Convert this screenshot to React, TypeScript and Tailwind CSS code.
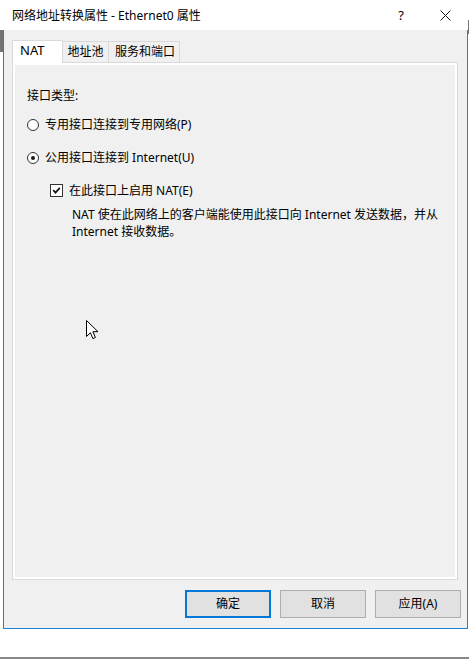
import React from "react";

const font = {
  fontFamily: '"Noto Sans", "Noto Sans CJK SC", sans-serif',
};

function Radio({ checked }: { checked?: boolean }) {
  return (
    <span className="flex h-[12px] w-[12px] items-center justify-center rounded-full border border-[#333333] bg-white">
      {checked && <span className="h-[4px] w-[4px] rounded-full bg-[#1a1a1a]" />}
    </span>
  );
}

function Checkbox({ checked }: { checked?: boolean }) {
  return (
    <span className="flex h-[13px] w-[13px] items-center justify-center border border-[#333333] bg-white">
      {checked && (
        <svg width="9" height="9" viewBox="0 0 9 9">
          <path d="M1.2 4.2 L3.5 6.6 L7.8 1.8" fill="none" stroke="#1a1a1a" strokeWidth="1.8" />
        </svg>
      )}
    </span>
  );
}

function Button({ label, primary }: { label: string; primary?: boolean }) {
  return (
    <button
      className={
        "flex h-[28px] w-[86px] items-center justify-center bg-[#e1e1e1] text-[12px] text-black " +
        (primary ? "border-2 border-[#0078d7]" : "border border-[#adadad]")
      }
    >
      {label}
    </button>
  );
}

function Pointer() {
  return (
    <svg width="13" height="20" viewBox="0 0 13 20">
      <path
        d="M0.5 0.5 L0.5 16.5 L4.4 12.7 L6.9 18.6 L9.4 17.5 L6.9 11.7 L12 11.7 Z"
        fill="#ffffff"
        stroke="#000000"
        strokeWidth="1"
        strokeLinejoin="miter"
      />
    </svg>
  );
}

export default function App() {
  return (
    <div className="relative h-[659px] w-[469px] overflow-hidden bg-white text-[12px] text-black" style={font}>
      {/* edges of the windows behind */}
      <div className="absolute left-0 top-[30px] h-[22px] w-[3px] bg-[#747474]" />
      <div className="absolute right-0 top-[20px] h-[14px] w-[1px] bg-[#747474]" />

      <div className="ml-[3px] flex h-[629px] w-[465px] flex-col">
        {/* title bar */}
        <div className="flex h-[30px] shrink-0 items-center bg-white">
          <span className="ml-[9px] leading-[17px]">网络地址转换属性 - Ethernet0 属性</span>
          <span className="ml-auto mr-[36px] text-[13px] leading-[17px]">?</span>
          <svg className="mr-[17px]" width="11" height="11" viewBox="0 0 11 11">
            <path d="M0.5 0.5 L10.5 10.5 M10.5 0.5 L0.5 10.5" stroke="#1a1a1a" strokeWidth="1" />
          </svg>
        </div>

        {/* body */}
        <div className="flex flex-1 flex-col border-x border-b border-[#1883d7] bg-[#f0f0f0] pl-[8px] pr-[9px] pt-[10px]">
          {/* tabs */}
          <div className="relative z-10 flex h-[22px] items-end">
            <div className="-mb-px flex h-[23px] w-[51px] items-center border border-b-0 border-[#d9d9d9] bg-white pb-[2px] pl-[7px] text-[13px]">
              NAT
            </div>
            <div className="flex h-[21px] w-[46px] items-center justify-center border border-b-0 border-l-0 border-[#d9d9d9] bg-[#f0f0f0]">
              地址池
            </div>
            <div className="flex h-[21px] w-[71px] items-center justify-center border border-b-0 border-l-0 border-[#d9d9d9] bg-[#f0f0f0] pl-[2px]">
              服务和端口
            </div>
          </div>

          {/* tab page */}
          <div className="flex h-[518px] flex-col border border-[#d9d9d9] bg-white p-[2px]">
            <div className="relative flex flex-1 flex-col bg-[#f0f0f0] pl-[12px] leading-[17px]">
              <div className="mt-[22px]">接口类型:</div>

              <div className="mt-[12px] flex items-center gap-[6px]">
                <Radio />
                <span>专用接口连接到专用网络(P)</span>
              </div>

              <div className="mt-[16px] flex items-center gap-[6px]">
                <Radio checked />
                <span>公用接口连接到 Internet(U)</span>
              </div>

              <div className="ml-[23px] mt-[16px] flex items-center gap-[6px]">
                <Checkbox checked />
                <span>在此接口上启用 NAT(E)</span>
              </div>

              <div className="ml-[45px] mt-[7px]">
                NAT 使在此网络上的客户端能使用此接口向 Internet 发送数据，并从
                <br />
                Internet 接收数据。
              </div>

              {/* mouse pointer resting over the page */}
              <div className="absolute left-[71px] top-[255px]">
                <Pointer />
              </div>
            </div>
          </div>

          {/* dialog buttons */}
          <div className="-mr-[3px] mt-[10px] flex justify-end gap-[9px]">
            <Button label="确定" primary />
            <Button label="取消" />
            <Button label="应用(A)" />
          </div>
        </div>
      </div>

      <div className="mt-[28px] h-[2px] w-full bg-[#888888]" />
    </div>
  );
}
